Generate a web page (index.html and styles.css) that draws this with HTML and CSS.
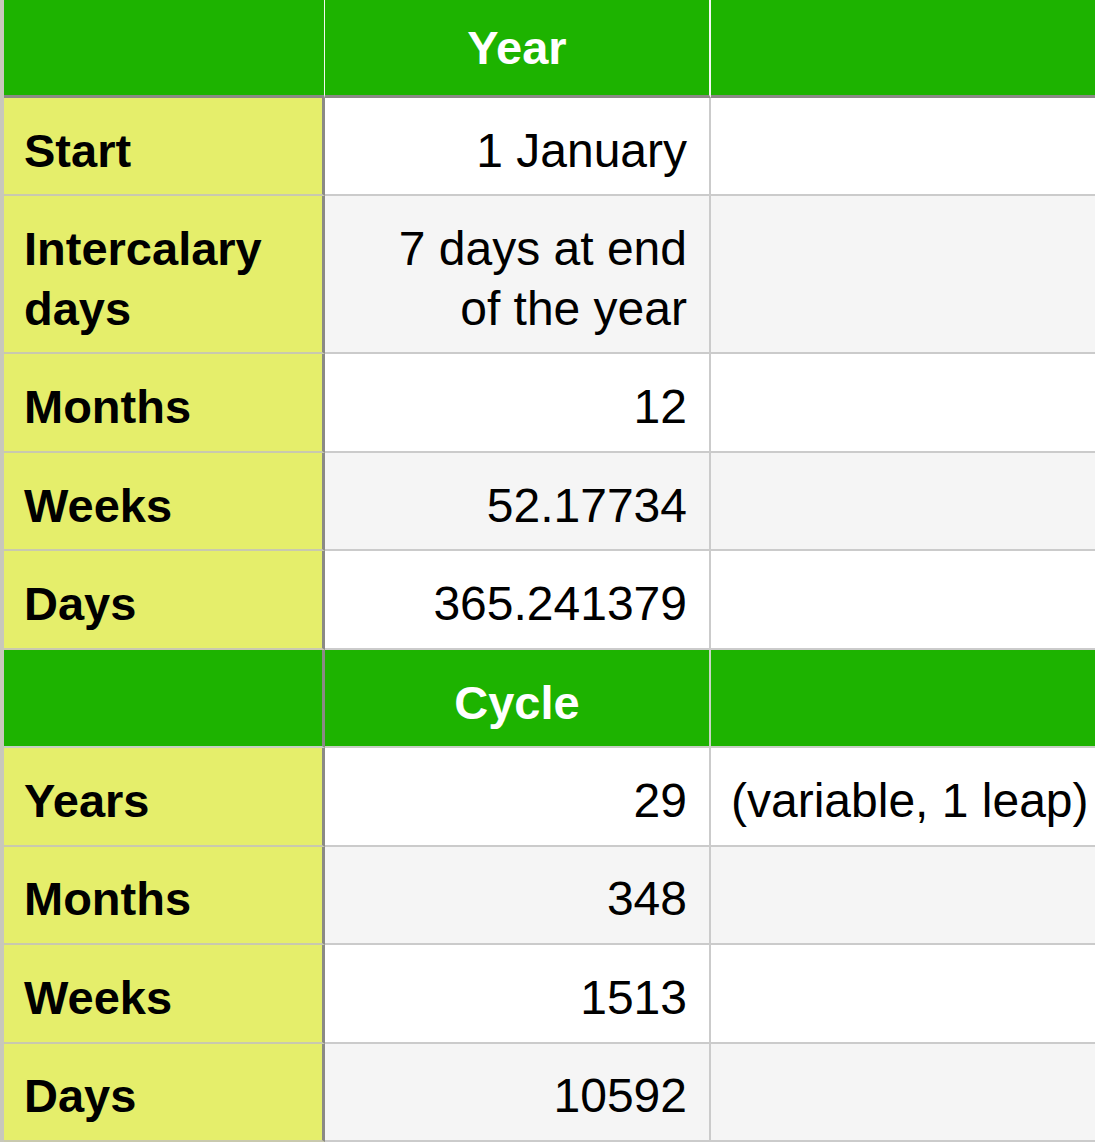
FILE: index.html
```html
<!DOCTYPE html>
<html lang="en">
<head>
<meta charset="utf-8">
<title>Calendar table</title>
<link rel="stylesheet" href="styles.css">
</head>
<body>
<table class="sheet">
  <colgroup>
    <col class="col-label">
    <col class="col-value">
    <col class="col-note">
  </colgroup>
  <thead>
    <tr class="head-row">
      <th class="label"></th>
      <th class="value">Year</th>
      <th class="note"></th>
    </tr>
  </thead>
  <tbody>
    <tr class="row-white">
      <th class="label">Start</th>
      <td class="value">1 January</td>
      <td class="note"></td>
    </tr>
    <tr class="row-gray">
      <th class="label">Intercalary<br>days</th>
      <td class="value">7 days at end<br>of the year</td>
      <td class="note"></td>
    </tr>
    <tr class="row-white">
      <th class="label">Months</th>
      <td class="value">12</td>
      <td class="note"></td>
    </tr>
    <tr class="row-gray">
      <th class="label">Weeks</th>
      <td class="value">52.17734</td>
      <td class="note"></td>
    </tr>
    <tr class="row-white">
      <th class="label">Days</th>
      <td class="value">365.241379</td>
      <td class="note"></td>
    </tr>
    <tr class="section-row">
      <th class="label"></th>
      <th class="value">Cycle</th>
      <th class="note"></th>
    </tr>
    <tr class="row-white">
      <th class="label">Years</th>
      <td class="value">29</td>
      <td class="note">(variable, 1 leap)</td>
    </tr>
    <tr class="row-gray">
      <th class="label">Months</th>
      <td class="value">348</td>
      <td class="note"></td>
    </tr>
    <tr class="row-white">
      <th class="label">Weeks</th>
      <td class="value">1513</td>
      <td class="note"></td>
    </tr>
    <tr class="row-gray">
      <th class="label">Days</th>
      <td class="value">10592</td>
      <td class="note"></td>
    </tr>
  </tbody>
</table>
</body>
</html>
```

FILE: styles.css
```css
html, body {
  margin: 0;
  padding: 0;
  background: #ffffff;
  overflow: hidden;
}

.sheet {
  table-layout: fixed;
  border-collapse: separate;
  border-spacing: 0;
  width: 1095px;
  border-left: 4px solid #c8c7bb;
  font-family: "Liberation Sans", Arial, Helvetica, sans-serif;
  font-size: 48px;
  color: #000;
}

.col-label { width: 321px; }
.col-value { width: 386px; }
.col-note { width: 384px; }

.sheet th,
.sheet td {
  box-sizing: border-box;
  padding: 22.6px 20px 14.4px 20px;
  line-height: 59.5px;
  vertical-align: top;
  white-space: nowrap;
  border-bottom: 2px solid #cbcbcb;
  font-weight: normal;
}

/* label column */
.sheet .label {
  background: #e5ee6b;
  text-align: left;
  font-weight: bold;
  font-size: 47px;
  border-right: 3px solid #8b8a85;
  border-bottom-color: #c9c9ae;
}

.sheet .value {
  text-align: right;
  padding-right: 22px;
  border-right: 2px solid #cbcbcb;
}

.sheet .note {
  text-align: left;
  padding-left: 20px;
  padding-right: 0;
}

.sheet .row-white .value,
.sheet .row-white .note { background: #ffffff; }

.sheet .row-gray .value,
.sheet .row-gray .note { background: #f5f5f5; }

/* top green header */
.sheet .head-row th {
  height: 98px;
  padding: 0;
  vertical-align: middle;
  background: #1db300;
  color: #ffffff;
  border-bottom: 3px solid #8b8a85;
}

.sheet .head-row th.label {
  border-right: 1px solid #f2f7ee;
}

.sheet .head-row th.value {
  text-align: center;
  font-weight: bold;
  font-size: 47px;
  border-right: 2px solid #f4f8f2;
}

/* section header row */
.sheet .section-row th {
  background: #1db300;
  color: #ffffff;
  border-bottom-color: #c8cfc4;
}

.sheet .section-row th.value {
  text-align: center;
  font-weight: bold;
  font-size: 47px;
  padding-left: 20px;
  padding-right: 20px;
  border-right-color: #c8d6c2;
}
```
